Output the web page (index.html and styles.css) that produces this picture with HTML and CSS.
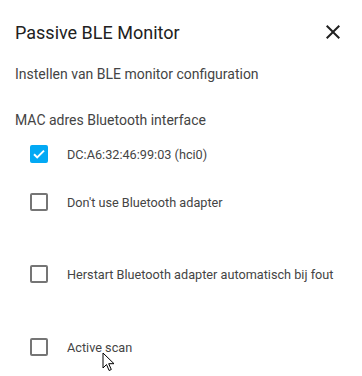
FILE: index.html
```html
<!DOCTYPE html>
<html>
<head>
<meta charset="utf-8">
<link rel="stylesheet" href="styles.css">
</head>
<body>
<div class="dialog">
  <div class="header">
    <h2 class="title">Passive BLE Monitor</h2>
    <svg class="close" width="24" height="24" viewBox="0 0 24 24"><path d="M19,6.41L17.59,5L12,10.59L6.41,5L5,6.41L10.59,12L5,17.59L6.41,19L12,13.41L17.59,19L19,17.59L13.41,12L19,6.41Z" fill="#212121"/></svg>
  </div>
  <p class="desc">Instellen van BLE monitor configuration</p>
  <p class="section">MAC adres Bluetooth interface</p>
  <div class="row r1">
    <span class="box checked"><svg width="18" height="18" viewBox="0 0 18 18"><path d="M4 9.2l3.2 3.2L14 5.6" fill="none" stroke="#fff" stroke-width="2"/></svg></span>
    <span class="label">DC:A6:32:46:99:03 (hci0)</span>
  </div>
  <div class="row r2">
    <span class="box"></span>
    <span class="label">Don't use Bluetooth adapter</span>
  </div>
  <div class="row r3">
    <span class="box"></span>
    <span class="label">Herstart Bluetooth adapter automatisch bij fout</span>
  </div>
  <div class="row r4">
    <span class="box"></span>
    <span class="label">Active scan</span>
  </div>
  <svg class="cursor" width="14" height="20" viewBox="0 0 14 20"><path d="M1 1v15l3.5-3.5 2.6 6 2.2-1-2.6-5.8H12Z" fill="#fff" stroke="#000" stroke-width="1"/></svg>
</div>
</body>
</html>
```
FILE: styles.css
```css
html, body { margin: 0; padding: 0; background: #fff; }
body { font-family: Roboto, "Noto Sans", sans-serif; color: #212121; }
.dialog { position: relative; width: 362px; height: 376px; overflow: hidden; padding: 0 0 0 15px; box-sizing: border-box; }
.header { display: flex; align-items: center; justify-content: space-between; height: 30px; margin-top: 17px; padding-right: 17px; }
.title { margin: 0; font-size: 18px; font-weight: 400; color: #212121; }
.close { display: block; }
.desc { margin: 17px 0 0; font-size: 14px; line-height: 20px; color: #444; }
.section { margin: 26px 0 0; font-size: 14px; line-height: 20px; color: #444; }
.row { display: flex; align-items: center; height: 20px; padding-left: 15px; }
.r1 { margin-top: 14px; }
.r2 { margin-top: 28px; }
.r3 { margin-top: 52px; }
.r4 { margin-top: 53px; }
.box { width: 18px; height: 18px; box-sizing: border-box; border: 2px solid #757575; border-radius: 2px; flex: none; display: flex; }
.box.checked { background: #03a9f4; border-color: #03a9f4; }
.box.checked svg { margin: -2px; }
.label { margin-left: 19px; font-size: 12.7px; color: #444; }
.cursor { position: absolute; left: 102px; top: 352px; }
```
